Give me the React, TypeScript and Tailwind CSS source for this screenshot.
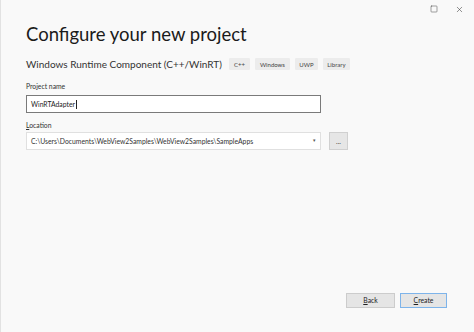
import { Square, X } from "lucide-react";

const tags = [
  { label: "C++", w: "w-[21px]" },
  { label: "Windows", w: "w-[35px]" },
  { label: "UWP", w: "w-[23px]" },
  { label: "Library", w: "w-[27px]" },
];

export default function App() {
  return (
    <div
      className="w-[474px] h-[332px] bg-[#f9f9f9] border-l border-[#e2e2e2] flex flex-col text-[#1b1b1b] overflow-hidden"
      style={{ fontFamily: 'Lato, "Noto Sans", sans-serif' }}
    >
      {/* title bar */}
      <div className="flex justify-end items-center h-[18px] pr-[10px] gap-[17px] text-[#333]">
        <Square size={8} strokeWidth={1.4} />
        <X size={9} strokeWidth={1.4} />
      </div>

      <div className="pl-[25px] pr-[26px] flex flex-col flex-1">
        <h1 className="text-[18.5px] leading-[26px] mt-[3px]">Configure your new project</h1>

        <div className="flex items-center mt-[10px] h-[14px]">
          <span className="text-[10px] text-[#333] mr-[7px]">Windows Runtime Component (C++/WinRT)</span>
          <div className="flex gap-[5px]">
            {tags.map((t) => (
              <span
                key={t.label}
                className={`${t.w} bg-[#ececec] text-[#444] text-[6px] h-[12px] flex items-center justify-center rounded-[1px]`}
              >
                {t.label}
              </span>
            ))}
          </div>
        </div>

        <div className="text-[6.8px] text-[#333] mt-[10px] leading-[10px]">Project name</div>
        <div className="mt-[4px] w-[295px] h-[18px] bg-white border border-[#7a7a7a] flex items-center px-[4px] text-[6.8px] text-[#222]">
          WinRTAdapter<span className="w-px h-[9px] bg-[#222] ml-px" />
        </div>

        <div className="text-[6.8px] text-[#333] mt-[7px] leading-[10px]">
          <span className="underline">L</span>ocation
        </div>
        <div className="flex items-center mt-[2px] gap-[8px]">
          <div className="w-[295px] h-[18px] bg-white border border-[#e0e0e0] flex items-center px-[4px] text-[6.8px] text-[#333]">
            <span className="flex-1">C:\Users\Documents\WebView2Samples\WebView2Samples\SampleApps</span>
            <span className="text-[5px] text-[#555]">▾</span>
          </div>
          <div className="w-[19px] h-[18px] bg-[#e6e6e6] border border-[#d0d0d0] flex items-center justify-center text-[7px] text-[#444] leading-none">
            ...
          </div>
        </div>

        <div className="flex-1" />

        <div className="flex justify-end gap-[5px] mb-[24px] mr-[1px]">
          <button className="w-[49px] h-[15px] bg-[#e5e5e5] border border-[#cccccc] text-[6.8px] text-[#222] flex items-center justify-center">
            <span className="underline">B</span>ack
          </button>
          <button className="w-[47px] h-[15px] bg-[#e5e5e5] border border-[#7eb4ea] text-[6.8px] text-[#222] flex items-center justify-center">
            <span className="underline">C</span>reate
          </button>
        </div>
      </div>
    </div>
  );
}
